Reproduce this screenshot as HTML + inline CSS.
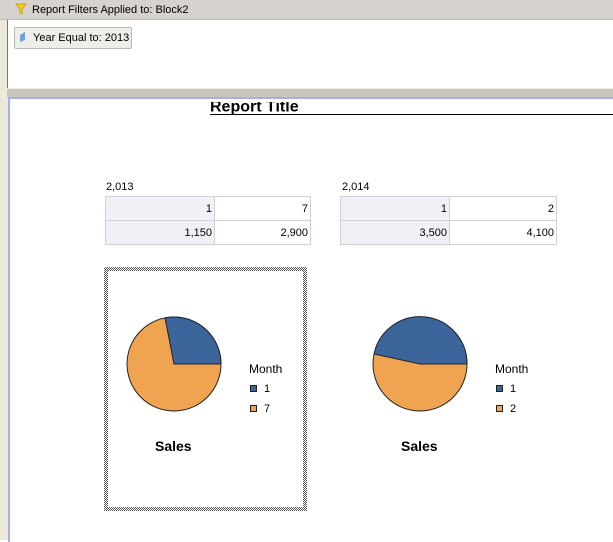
<!DOCTYPE html>
<html><head><style>
body{margin:0;width:613px;height:540px;overflow:hidden;background:#fff;font-family:"Liberation Sans",Arial,sans-serif;position:relative}
.a{position:absolute}
td{border:1px solid #d4d0d8;font-size:11px;text-align:right;padding:0 2px 0 0;height:23px}
</style></head><body>
<div class="a" style="left:0;top:0;width:613px;height:540px;background:#ece9d8"></div>
<div class="a" style="left:0;top:0;width:613px;height:19px;background:#d6d3ce;border-bottom:1px solid #bbb"></div>
<svg class="a" style="left:15px;top:3px" width="12" height="12"><path d="M1 1H11L7 6V11L5 10V6Z" fill="#f5d020" stroke="#c9a400"/></svg>
<div class="a" style="left:32px;top:4px;font-size:11px">Report Filters Applied to: Block2</div>
<div class="a" style="left:7px;top:20px;width:606px;height:68px;background:#fff;border-left:1px solid #777"></div>
<div class="a" style="left:14px;top:27px;width:116px;height:20px;background:#eeede9;border:1px solid #b8b8b8;border-radius:2px"></div>
<svg class="a" style="left:19px;top:31px" width="8" height="12"><path d="M1 4L6 1V9L1 11Z" fill="#6aa0e0"/></svg>
<div class="a" style="left:33px;top:32px;font-size:11px">Year Equal to: 2013</div>
<div class="a" style="left:7px;top:89px;width:606px;height:8px;background:#c8c6c0"></div>
<div class="a" style="left:8px;top:97px;width:605px;height:443px;background:#fff;border-left:2px solid #a8b0e0;border-top:2px solid #a8b0e0"></div>
<svg class="a" style="left:200px;top:102px" width="200" height="12"><text x="10" y="9.5" font-family="Liberation Sans,Arial,sans-serif" font-size="16" font-weight="bold">Report Title</text></svg>
<div class="a" style="left:210px;top:114px;width:403px;height:1px;background:#000"></div>
<div class="a" style="left:106px;top:181px;font-size:11px">2,013</div>
<div class="a" style="left:342px;top:181px;font-size:11px">2,014</div>
<table class="a" style="left:105px;top:196px;border-collapse:collapse;width:206px"><tr><td style="background:#f3eff7;width:106px">1</td><td>7</td></tr><tr><td style="background:#f3eff7">1,150</td><td>2,900</td></tr></table>
<table class="a" style="left:340px;top:196px;border-collapse:collapse;width:217px"><tr><td style="background:#f3eff7;width:106px">1</td><td>2</td></tr><tr><td style="background:#f3eff7">3,500</td><td>4,100</td></tr></table>
<div class="a" style="left:104px;top:267px;width:203px;height:244px;background:repeating-conic-gradient(#555 0 25%,#fff 0 50%) 0 0/2px 2px"></div>
<div class="a" style="left:108px;top:271px;width:195px;height:236px;background:#fff"></div>
<svg class="a" style="left:0;top:0" width="613" height="540">
<g stroke="#222" stroke-width="1">
<circle cx="174" cy="364" r="47" fill="#f0a452"/>
<path d="M174 364L165 317.9A47 47 0 0 1 221 364Z" fill="#3c659c"/>
<circle cx="420" cy="364" r="47" fill="#f0a452"/>
<path d="M420 364L467 364A47 47 0 0 0 374 354Z" fill="#3c659c"/>
<rect x="250.5" y="385.5" width="6" height="6" fill="#3c659c"/>
<rect x="250.5" y="405.5" width="6" height="6" fill="#f0a452"/>
<rect x="496.5" y="385.5" width="6" height="6" fill="#3c659c"/>
<rect x="496.5" y="405.5" width="6" height="6" fill="#f0a452"/>
</g>
<g font-size="12" font-family="Liberation Sans,Arial,sans-serif">
<text x="249" y="373">Month</text><text x="264" y="392" font-size="11">1</text><text x="264" y="412" font-size="11">7</text>
<text x="495" y="373">Month</text><text x="510" y="392" font-size="11">1</text><text x="510" y="412" font-size="11">2</text>
<text x="155" y="451" font-size="14" font-weight="bold">Sales</text>
<text x="401" y="451" font-size="14" font-weight="bold">Sales</text>
</g></svg>
</body></html>
